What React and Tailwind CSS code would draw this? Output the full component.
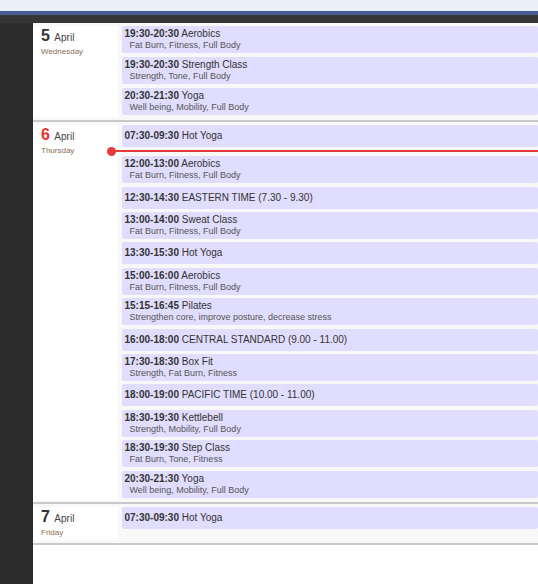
const days = [
  {
    num: "5",
    month: "April",
    weekday: "Wednesday",
    today: false,
    gap: "gap-[4px]",
    events: [
      { time: "19:30-20:30", name: "Aerobics", tags: "Fat Burn, Fitness, Full Body" },
      { time: "19:30-20:30", name: "Strength Class", tags: "Strength, Tone, Full Body" },
      { time: "20:30-21:30", name: "Yoga", tags: "Well being, Mobility, Full Body" },
    ],
  },
  {
    num: "6",
    month: "April",
    weekday: "Thursday",
    today: true,
    gap: "gap-[3.4px]",
    events: [
      { time: "07:30-09:30", name: "Hot Yoga" },
      { now: true },
      { time: "12:00-13:00", name: "Aerobics", tags: "Fat Burn, Fitness, Full Body" },
      { time: "12:30-14:30", name: "EASTERN TIME (7.30 - 9.30)" },
      { time: "13:00-14:00", name: "Sweat Class", tags: "Fat Burn, Fitness, Full Body" },
      { time: "13:30-15:30", name: "Hot Yoga" },
      { time: "15:00-16:00", name: "Aerobics", tags: "Fat Burn, Fitness, Full Body" },
      { time: "15:15-16:45", name: "Pilates", tags: "Strengthen core, improve posture, decrease stress" },
      { time: "16:00-18:00", name: "CENTRAL STANDARD (9.00 - 11.00)" },
      { time: "17:30-18:30", name: "Box Fit", tags: "Strength, Fat Burn, Fitness" },
      { time: "18:00-19:00", name: "PACIFIC TIME (10.00 - 11.00)" },
      { time: "18:30-19:30", name: "Kettlebell", tags: "Strength, Mobility, Full Body" },
      { time: "18:30-19:30", name: "Step Class", tags: "Fat Burn, Tone, Fitness" },
      { time: "20:30-21:30", name: "Yoga", tags: "Well being, Mobility, Full Body" },
    ],
  },
  {
    num: "7",
    month: "April",
    weekday: "Friday",
    today: false,
    gap: "gap-[3.4px]",
    events: [{ time: "07:30-09:30", name: "Hot Yoga" }],
  },
];

const EventItem = ({ ev }) => {
  if (ev.now) {
    // red "now" marker, drawn over the gap between two classes
    return (
      <div className="relative h-[3px]">
        <div className="absolute left-[-10px] right-0 top-[0.5px] h-[2px] bg-[#e83a3a]" />
        <div className="absolute left-[-14.5px] top-[-3px] w-[9px] h-[9px] rounded-full bg-[#e83a3a]" />
      </div>
    );
  }
  return (
    <div
      className={
        "bg-[#e1ddfe] rounded-[2px] px-[3px] text-[#333] " +
        (ev.tags ? "pt-[2px] pb-[3px]" : "py-[5px]")
      }
    >
      <div className="text-[10px] leading-[12px] whitespace-nowrap">
        <span className="font-bold">{ev.time}</span> {ev.name}
      </div>
      {ev.tags && (
        <div className="text-[9px] leading-[10px] pl-[5px] text-[#555] whitespace-nowrap">
          {ev.tags}
        </div>
      )}
    </div>
  );
};

const DayRow = ({ day }) => {
  return (
    <div className="flex bg-[#f8f8f8] pt-[3px] pb-[2.5px] border-b-2 border-[#c9c9c9]">
      <div className="w-[85px] shrink-0 bg-white rounded-[2px] px-[8px] pt-[2px] pb-[1px]">
        <div className="leading-[16px] whitespace-nowrap">
          <span className={"text-[16px] font-bold " + (day.today ? "text-[#e8332f]" : "text-[#333]")}>
            {day.num}
          </span>{" "}
          <span className="text-[10px] text-[#444]">{day.month}</span>
        </div>
        <div className="text-[8px] leading-[12px] text-[#8a6c52]">{day.weekday}</div>
      </div>
      <div className={"flex-1 min-w-0 ml-[3.5px] pb-[2px] flex flex-col " + day.gap}>
        {day.events.map((ev, i) => (
          <EventItem key={i} ev={ev} />
        ))}
      </div>
    </div>
  );
};

export default function App() {
  return (
    <div className="w-[538px] h-[584px] overflow-hidden flex flex-col bg-white font-['Liberation_Sans',Arial,sans-serif]">
      <div className="h-[11px] shrink-0 bg-[#eaeff7]" />
      <div className="h-[4px] shrink-0 bg-[#4a5a95]" />
      <div className="h-[8px] shrink-0 bg-[#353535]" />
      <div className="flex flex-1">
        <div className="w-[33px] shrink-0 bg-[#2b2b2b]" />
        <div className="flex-1 min-w-0 bg-white">
          {days.map((d) => (
            <DayRow key={d.num} day={d} />
          ))}
        </div>
      </div>
    </div>
  );
}
